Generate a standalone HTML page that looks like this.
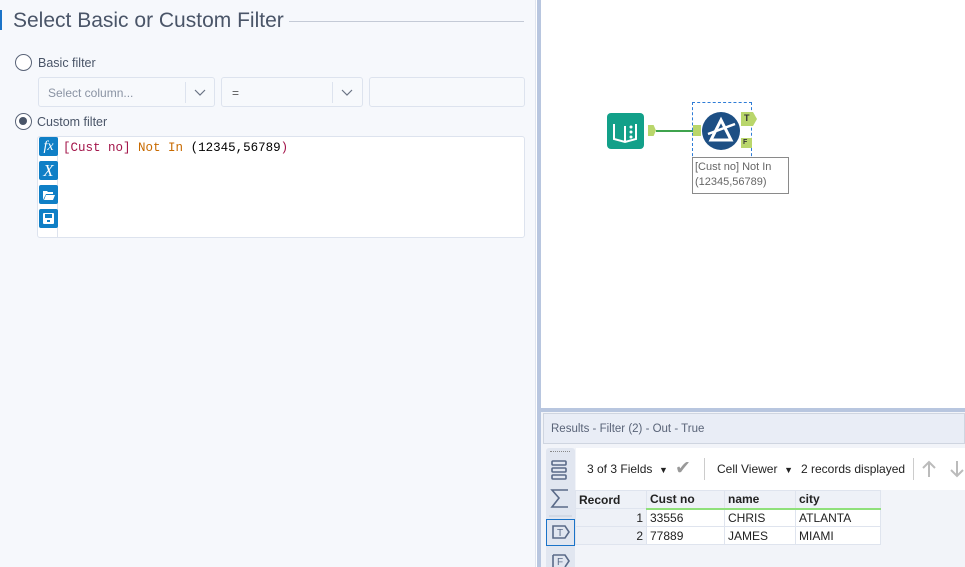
<!DOCTYPE html>
<html><head><meta charset="utf-8"><style>
*{margin:0;padding:0;box-sizing:border-box}
body{width:965px;height:567px;overflow:hidden;background:#fff;font-family:"Liberation Sans",sans-serif;position:relative}
.abs{position:absolute}
#left{left:0;top:0;width:536px;height:567px;background:#f6f8fc;border-right:1px solid #dfe4ee}
#bar{left:537px;top:0;width:4px;height:567px;background:#b8c6df}
h1{position:absolute;left:13px;top:9px;font-weight:normal;font-size:21px;color:#4a5568}
.radio{position:absolute;width:17px;height:17px;border:1.5px solid #5a6478;border-radius:50%;background:#fff}
.lbl{position:absolute;font-size:12.5px;color:#4a5568}
.box{position:absolute;border:1px solid #dde3ee;border-radius:3px;background:#f7f9fc}
.btn{position:absolute;left:39px;width:19px;height:19px;background:#0f7fc6;border-radius:2px;color:#fff;font-family:"Liberation Serif",serif;font-style:italic;font-size:14px;text-align:center;line-height:19px}
.mono{font-family:"Liberation Mono",monospace;font-size:12.5px}
td{border:1px solid #dfe4ee;font-size:12px;height:18px;padding:0 3px;color:#222}
</style></head><body>
<div id="left" class="abs">
<div class="abs" style="left:0;top:10px;width:2px;height:20px;background:#1a73c8"></div>
<h1>Select Basic or Custom Filter</h1>
<div class="abs" style="left:289px;top:21px;width:235px;height:1px;background:#c4cad6"></div>
<div class="radio" style="left:15px;top:54px"></div>
<div class="lbl" style="left:38px;top:56px">Basic filter</div>
<div class="box" style="left:38px;top:77px;width:177px;height:30px"><span class="abs" style="left:9px;top:8px;font-size:12px;color:#8a93a3">Select column...</span><div class="abs" style="left:146px;top:4px;width:1px;height:21px;background:#dde3ee"></div><svg class="abs" style="left:155px;top:9px" width="12" height="10"><path d="M1 3l5 5 5-5" stroke="#6a7384" fill="none" stroke-width="1.2"/></svg></div>
<div class="box" style="left:221px;top:77px;width:142px;height:30px"><span class="abs" style="left:10px;top:8px;font-size:12px;color:#555">=</span><div class="abs" style="left:110px;top:4px;width:1px;height:21px;background:#dde3ee"></div><svg class="abs" style="left:119px;top:9px" width="12" height="10"><path d="M1 3l5 5 5-5" stroke="#6a7384" fill="none" stroke-width="1.2"/></svg></div>
<div class="box" style="left:369px;top:77px;width:156px;height:30px"></div>
<div class="radio" style="left:15px;top:113px"><div class="abs" style="left:3px;top:3px;width:8px;height:8px;border-radius:50%;background:#4a5568"></div></div>
<div class="lbl" style="left:37px;top:115px">Custom filter</div>
<div class="abs" style="left:37px;top:136px;width:488px;height:102px;background:#fff;border:1px solid #dde3ee;border-radius:3px"></div>
<div class="abs" style="left:57px;top:137px;width:1px;height:100px;background:#dde3ee"></div>
<div class="btn" style="top:137px">fx</div>
<div class="btn" style="top:161px;font-size:17px">X</div>
<div class="btn" style="top:185px"><svg width="19" height="19"><path d="M4 6h4l1 1h5v2H7l-3 6z M5 15l2-5h9l-2 5z" fill="#fff"/></svg></div>
<div class="btn" style="top:209px"><svg width="19" height="19"><rect x="4" y="4" width="11" height="11" rx="1" fill="#fff"/><rect x="6" y="5" width="7" height="4" fill="#0f7fc6"/><rect x="8" y="11" width="3" height="2" fill="#0f7fc6"/></svg></div>
<div class="abs mono" style="left:63px;top:141px"><span style="color:#a3154a">[Cust no]</span> <span style="color:#c86a00">Not In</span> <span style="color:#000">(12345,56789</span><span style="color:#a3154a">)</span></div>
</div>
<div id="bar" class="abs"></div>
<!-- canvas -->
<div class="abs" style="left:607px;top:113px;width:37px;height:36px;background:#12a089;border-radius:4px"><svg width="37" height="36"><path d="M7 11v15l11 3 11-3V11" stroke="#fff" stroke-width="2" fill="none"/><path d="M18 13v15" stroke="#fff" stroke-width="2"/><circle cx="24" cy="14" r="1.5" fill="#fff"/><circle cx="24" cy="19" r="1.5" fill="#fff"/><circle cx="24" cy="24" r="1.5" fill="#fff"/></svg></div>
<div class="abs" style="left:648px;top:125px;width:8px;height:11px;background:#b9d66b;clip-path:polygon(0 0,70% 0,100% 50%,70% 100%,0 100%)"></div>
<div class="abs" style="left:656px;top:130px;width:38px;height:2px;background:#3fa34d"></div>
<div class="abs" style="left:693px;top:125px;width:8px;height:11px;background:#b9d66b"></div>
<div class="abs" style="left:692px;top:102px;width:60px;height:90px;border:1px dashed #2e7cd6;border-bottom:none"></div>
<div class="abs" style="left:702px;top:112px;width:38px;height:38px;border-radius:50%;background:#1d4f84"><svg width="38" height="38"><path d="M19 8L9 28h20z" stroke="#fff" stroke-width="3" fill="none"/><path d="M6 22L33 12" stroke="#fff" stroke-width="2.5"/></svg></div>
<div class="abs" style="left:741px;top:112px;width:16px;height:14px;background:#b9d66b;clip-path:polygon(0 0,75% 0,100% 50%,75% 100%,0 100%);font-size:9px;font-weight:bold;color:#333;padding:1px 0 0 3px">T</div>
<div class="abs" style="left:741px;top:138px;width:11px;height:10px;background:#b9d66b;font-size:7px;font-weight:bold;color:#333;padding:1px 0 0 2px">F</div>
<div class="abs" style="left:692px;top:157px;width:97px;height:37px;background:#fff;border:1px solid #8a8a8a;font-size:11px;color:#666;padding:2px 2px;line-height:15px">[Cust no] Not In (12345,56789)</div>
<!-- results -->
<div class="abs" style="left:541px;top:408px;width:424px;height:4px;background:#b8c6df"></div>
<div class="abs" style="left:541px;top:412px;width:424px;height:155px;background:#f2f4f9"></div>
<div class="abs" style="left:543px;top:413px;width:422px;height:31px;background:#e9edf6;border:1px solid #cfd5e0;font-size:11.5px;color:#5a6478;padding:9px 0 0 7px">Results - Filter (2) - Out - True</div>
<div class="abs" style="left:546px;top:448px;width:29px;height:119px;background:#e1e6f0;border-radius:3px 3px 0 0"></div>
<div class="abs" style="left:550px;top:451px;width:20px;height:1px;border-top:1px dotted #888"></div>
<svg class="abs" style="left:546px;top:448px" width="29" height="119"><g stroke="#5a6a88" stroke-width="1.6" fill="none"><rect x="6" y="13" width="14" height="4" rx="1"/><rect x="6" y="20" width="14" height="4" rx="1"/><rect x="6" y="27" width="14" height="4" rx="1"/><path d="M22 42H6l7 8-7 9h16"/><path d="M7 78h12l4 6-4 6H7z"/><path d="M7 107h12l4 6-4 6"/><path d="M7 107v12"/></g><line x1="3" y1="68" x2="26" y2="68" stroke="#c5ccd9"/><text x="11" y="88" font-size="10" fill="#5a6a88" font-family="Liberation Sans">T</text><text x="11" y="117" font-size="10" fill="#5a6a88" font-family="Liberation Sans">F</text></svg>
<div class="abs" style="left:546px;top:519px;width:29px;height:27px;border:1px solid #1a73c8"></div>
<div class="abs" style="left:576px;top:448px;width:389px;height:42px;background:#fff;font-size:12px;color:#222"><span class="abs" style="left:11px;top:14px">3 of 3 Fields &nbsp;<span style="font-size:9px">▼</span></span><span class="abs" style="left:99px;top:9px;color:#999;font-size:19px">✔</span><div class="abs" style="left:128px;top:10px;width:1px;height:22px;background:#ccc"></div><span class="abs" style="left:141px;top:14px">Cell Viewer &nbsp;<span style="font-size:9px">▼</span></span><span class="abs" style="left:225px;top:14px">2 records displayed</span><div class="abs" style="left:337px;top:10px;width:1px;height:22px;background:#ccc"></div><svg class="abs" style="left:344px;top:11px" width="45" height="20"><g stroke="#bbb" stroke-width="2" fill="none"><path d="M9 18V3M3 9l6-6 6 6"/><path d="M37 2v15M31 11l6 6 6-6"/></g></svg></div>
<table class="abs" style="left:575px;top:490px;border-collapse:collapse;background:#fff">
<tr style="background:#eef1f7;font-weight:bold"><td style="width:71px">Record</td><td style="width:78px;border-bottom:2px solid #8fe07a">Cust no</td><td style="width:71px;border-bottom:2px solid #8fe07a">name</td><td style="width:85px;border-bottom:2px solid #8fe07a">city</td></tr>
<tr><td style="text-align:right;background:#eef1f7">1</td><td>33556</td><td>CHRIS</td><td>ATLANTA</td></tr>
<tr><td style="text-align:right;background:#eef1f7">2</td><td>77889</td><td>JAMES</td><td>MIAMI</td></tr>
</table>
</body></html>
